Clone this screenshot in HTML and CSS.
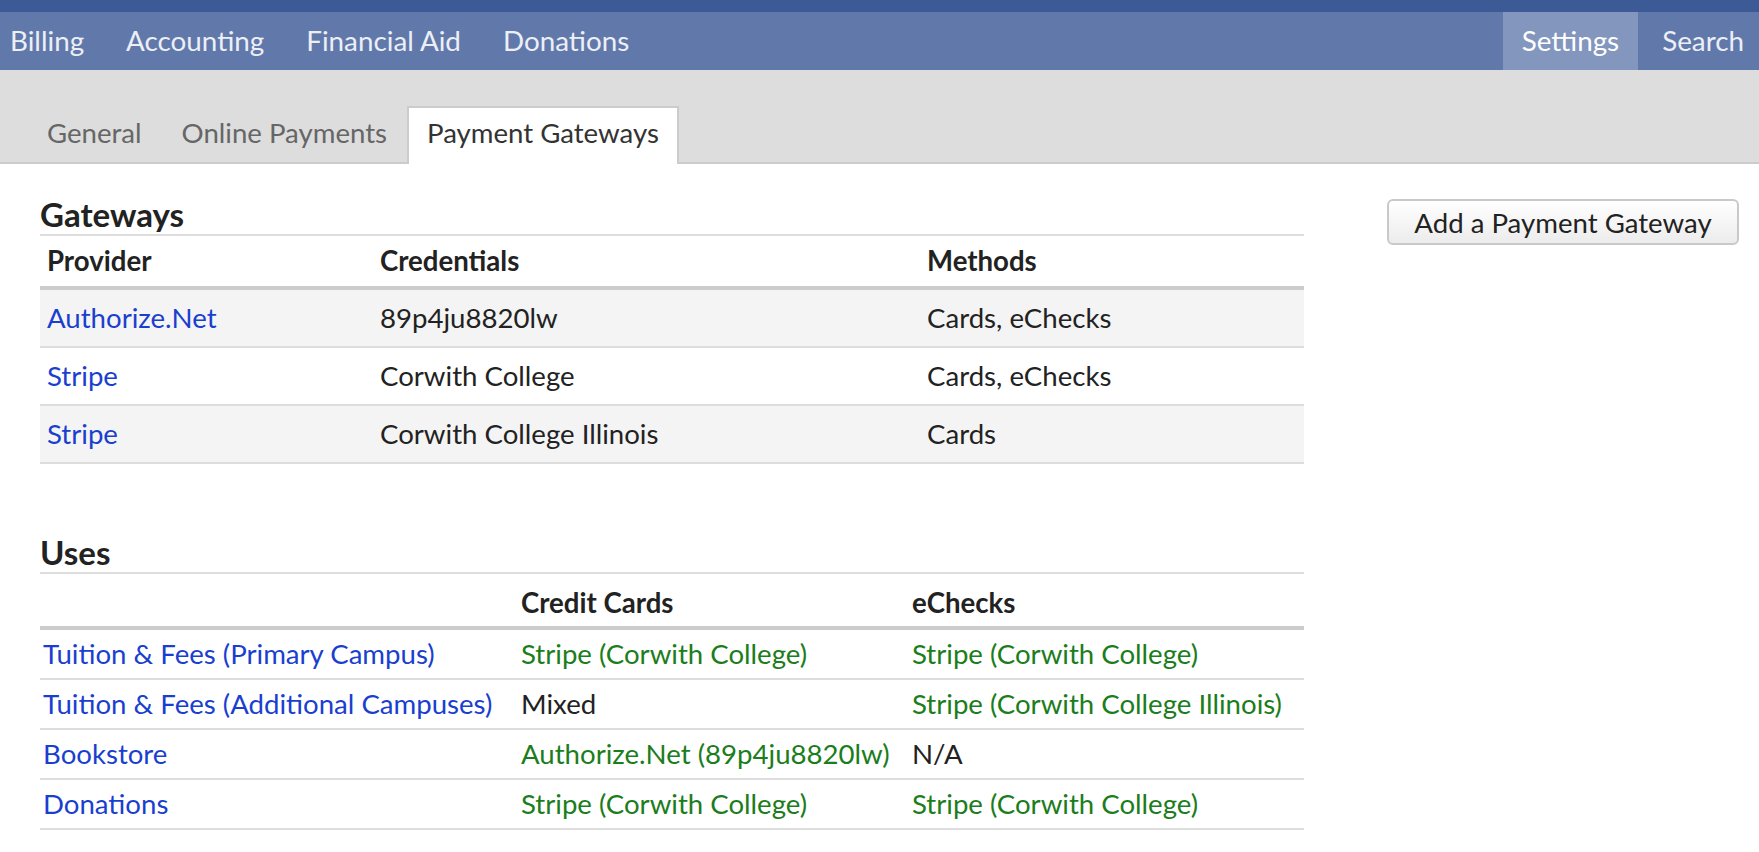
FILE: index.html
```html
<!DOCTYPE html>
<html lang="en">
<head>
<meta charset="utf-8">
<title>Payment Gateways</title>
<link rel="stylesheet" href="styles.css">
</head>
<body>
<header class="topnav">
  <nav class="nav-group nav-left">
    <a class="nav-item">Billing</a>
    <a class="nav-item">Accounting</a>
    <a class="nav-item">Financial Aid</a>
    <a class="nav-item">Donations</a>
  </nav>
  <nav class="nav-group nav-right">
    <a class="nav-item active">Settings</a>
    <a class="nav-item search">Search</a>
  </nav>
</header>
<div class="subtabs">
  <a class="tab">General</a>
  <a class="tab">Online Payments</a>
  <a class="tab active">Payment Gateways</a>
</div>
<main class="content">
  <div class="main-col">
    <section class="block">
      <h2 class="block-title">Gateways</h2>
      <table class="grid gateways">
        <colgroup><col class="g1"><col class="g2"><col></colgroup>
        <thead><tr><th>Provider</th><th>Credentials</th><th>Methods</th></tr></thead>
        <tbody>
          <tr><td><a class="link">Authorize.Net</a></td><td>89p4ju8820lw</td><td>Cards, eChecks</td></tr>
          <tr><td><a class="link">Stripe</a></td><td>Corwith College</td><td>Cards, eChecks</td></tr>
          <tr><td><a class="link">Stripe</a></td><td>Corwith College Illinois</td><td>Cards</td></tr>
        </tbody>
      </table>
    </section>
    <section class="block uses">
      <h2 class="block-title">Uses</h2>
      <table class="grid usetable">
        <colgroup><col class="u1"><col class="u2"><col></colgroup>
        <thead><tr><th></th><th>Credit Cards</th><th>eChecks</th></tr></thead>
        <tbody>
          <tr><td><a class="link">Tuition &amp; Fees (Primary Campus)</a></td><td class="ok">Stripe (Corwith College)</td><td class="ok">Stripe (Corwith College)</td></tr>
          <tr><td><a class="link">Tuition &amp; Fees (Additional Campuses)</a></td><td>Mixed</td><td class="ok">Stripe (Corwith College Illinois)</td></tr>
          <tr><td><a class="link">Bookstore</a></td><td class="ok">Authorize.Net (89p4ju8820lw)</td><td>N/A</td></tr>
          <tr><td><a class="link">Donations</a></td><td class="ok">Stripe (Corwith College)</td><td class="ok">Stripe (Corwith College)</td></tr>
        </tbody>
      </table>
    </section>
  </div>
  <aside class="side">
    <button class="btn" type="button">Add a Payment Gateway</button>
  </aside>
</main>
</body>
</html>
```

FILE: styles.css
```css
html, body {
  margin: 0;
  padding: 0;
  background: #ffffff;
}
body {
  font-family: "Lato", "Noto Sans", sans-serif;
  color: #222222;
  overflow-x: hidden;
}
a { text-decoration: none; cursor: pointer; }

.topnav {
  border-top: 12px solid #3c5a96;
  background: #6179aa;
  height: 58px;
  display: flex;
  justify-content: space-between;
  overflow: hidden;
}
.nav-group { display: flex; }
.nav-left { margin-left: -11px; }
.nav-right { margin-right: -4px; }
.nav-item {
  display: block;
  padding: 0 21px;
  line-height: 58px;
  font-size: 27.8px;
  color: #eceff6;
}
.nav-right .nav-item { padding: 0 19px; }
.nav-right .search { padding-left: 24px; }
.nav-item.active {
  background: #8296be;
  color: #ffffff;
}

.subtabs {
  background: #dddddd;
  border-bottom: 2px solid #cccccc;
  height: 92px;
  box-sizing: content-box;
  display: flex;
  align-items: flex-end;
  padding-left: 27px;
}
.tab {
  display: block;
  padding: 0 18px 6px;
  line-height: 50px;
  font-size: 27.6px;
  color: #666666;
  border: 2px solid transparent;
  border-bottom: 0;
  margin-bottom: -2px;
}
.tab.active {
  background: #ffffff;
  border-color: #cccccc;
  color: #333333;
}

.content {
  display: flex;
  justify-content: space-between;
  align-items: flex-start;
  padding: 32px 20px 0 40px;
}
.main-col { width: 1264px; }
.block-title {
  margin: 0;
  font-size: 33px;
  font-weight: 700;
  line-height: 36px;
  padding-bottom: 2px;
  border-bottom: 2px solid #dddddd;
  color: #222222;
}
.uses { margin-top: 70px; }

.grid {
  width: 100%;
  border-collapse: separate;
  border-spacing: 0;
  table-layout: fixed;
  font-size: 27.6px;
}
.grid th {
  text-align: left;
  font-weight: 700;
  padding: 0 7px;
  line-height: 50px;
  border-bottom: 4px solid #cccccc;
  white-space: nowrap;
}
.grid td {
  padding: 0 7px;
  line-height: 56px;
  border-bottom: 2px solid #dddddd;
  white-space: nowrap;
}
.gateways tbody tr:nth-child(odd) td { background: #f4f4f4; }
.g1 { width: 333px; }
.g2 { width: 547px; }
.u1 { width: 478px; }
.u2 { width: 391px; }
.usetable th { padding: 6px 3px 0; line-height: 46px; }
.usetable td { padding: 0 3px; line-height: 48px; }

.link { color: #1a3fcf; }
.ok { color: #1b7d1b; }

.side { padding-top: 3px; }
.btn {
  width: 352px;
  height: 46px;
  border: 2px solid #c9c9c9;
  border-radius: 6px;
  background: linear-gradient(#ffffff, #ececec);
  font-family: inherit;
  font-size: 27.6px;
  color: #222222;
  padding: 0;
}
```
